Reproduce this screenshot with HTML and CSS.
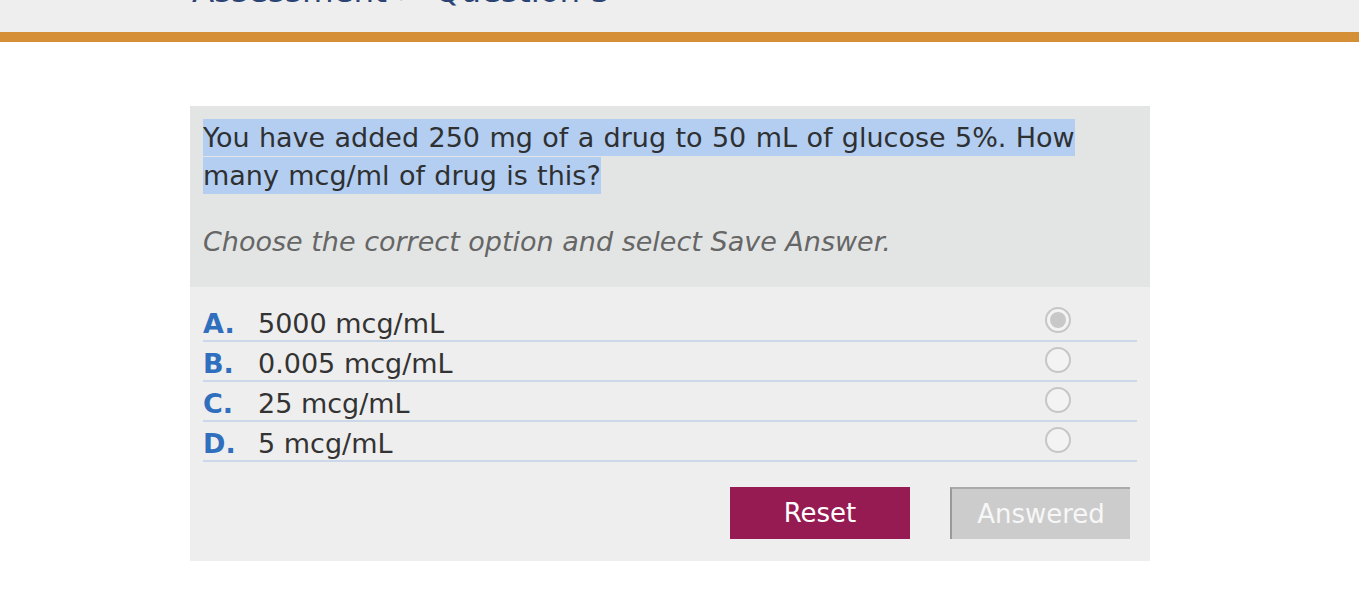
FILE: index.html
```html
<!DOCTYPE html>
<html lang="en">
<head>
<meta charset="utf-8">
<title>Assessment &gt; Question 5</title>
<link rel="stylesheet" href="styles.css">
</head>
<body>
<header class="topbar">
  <div class="crumb">Assessment &gt; Question 5</div>
</header>
<main class="page">
  <section class="card">
    <div class="stem">
      <p class="question"><span class="sel">You have added 250 mg of a drug to 50 mL of glucose 5%. How many mcg/ml of drug is this?</span></p>
      <p class="hint">Choose the correct option and select Save Answer.</p>
    </div>
    <div class="answers">
      <ul class="options">
        <li class="option"><span class="letter">A.</span><span class="text">5000 mcg/mL</span><span class="radio checked"></span></li>
        <li class="option"><span class="letter">B.</span><span class="text">0.005 mcg/mL</span><span class="radio"></span></li>
        <li class="option"><span class="letter">C.</span><span class="text">25 mcg/mL</span><span class="radio"></span></li>
        <li class="option"><span class="letter">D.</span><span class="text">5 mcg/mL</span><span class="radio"></span></li>
      </ul>
      <div class="actions">
        <button class="btn btn-reset" type="button">Reset</button>
        <button class="btn btn-answered" type="button">Answered</button>
      </div>
    </div>
  </section>
</main>
</body>
</html>
```
FILE: styles.css
```css
* { box-sizing: border-box; }
html, body { margin: 0; padding: 0; background: #ffffff; }
body {
  font-family: "DejaVu Sans", Verdana, sans-serif;
  color: #333333;
}
.topbar {
  height: 42px;
  background: #eeeeee;
  border-bottom: 10px solid #d48f37;
  overflow: hidden;
  padding-left: 192px;
}
.crumb {
  font-size: 32.5px;
  line-height: 32px;
  margin-top: -25px;
  color: #2c4474;
  white-space: nowrap;
}
.page {
  padding: 64px 0 0 190px;
}
.card {
  width: 960px;
  background: #eeeeee;
}
.stem {
  background: #e3e5e4;
  padding: 13px 13px 27px 13px;
}
.question {
  margin: 0;
  font-size: 27px;
  line-height: 37.5px;
  color: #2f3031;
  max-width: 900px;
  word-spacing: 0.8px;
}
.sel {
  background: #b3cef1;
  padding: 3px 0;
}
.hint {
  margin: 28.5px 0 0 0;
  font-size: 27px;
  line-height: 37.5px;
  font-style: italic;
  color: #666666;
}
.answers {
  padding: 15px 13px 22px 13px;
}
.options {
  list-style: none;
  margin: 0;
  padding: 0;
}
.option {
  display: grid;
  grid-template-columns: 55px 1fr 26px;
  align-items: center;
  padding: 5px 66px 0 0;
  line-height: 33px;
  font-size: 27px;
  border-bottom: 2px solid #cad8ea;
}
.letter {
  font-weight: bold;
  color: #2f6fbe;
}
.text {
  color: #333333;
}
.radio {
  width: 26px;
  height: 26px;
  border-radius: 50%;
  border: 2px solid #c6c6c6;
  background: #f3f3f3;
  margin-top: -8px;
  display: flex;
  align-items: center;
  justify-content: center;
}
.radio.checked::after {
  content: "";
  width: 16px;
  height: 16px;
  border-radius: 50%;
  background: #c8c8c8;
}
.actions {
  display: flex;
  justify-content: flex-end;
  gap: 40px;
  margin: 25px 7px 0 0;
}
.btn {
  width: 180px;
  height: 52px;
  font-family: "DejaVu Sans", Verdana, sans-serif;
  font-size: 26px;
  padding: 0;
  cursor: pointer;
}
.btn-reset {
  background: #951b52;
  color: #ffffff;
  border: none;
}
.btn-answered {
  background: #cccccc;
  color: #f7f7f7;
  border: none;
  border-top: 2px solid #aaaaaa;
  border-left: 2px solid #999999;
}
```
